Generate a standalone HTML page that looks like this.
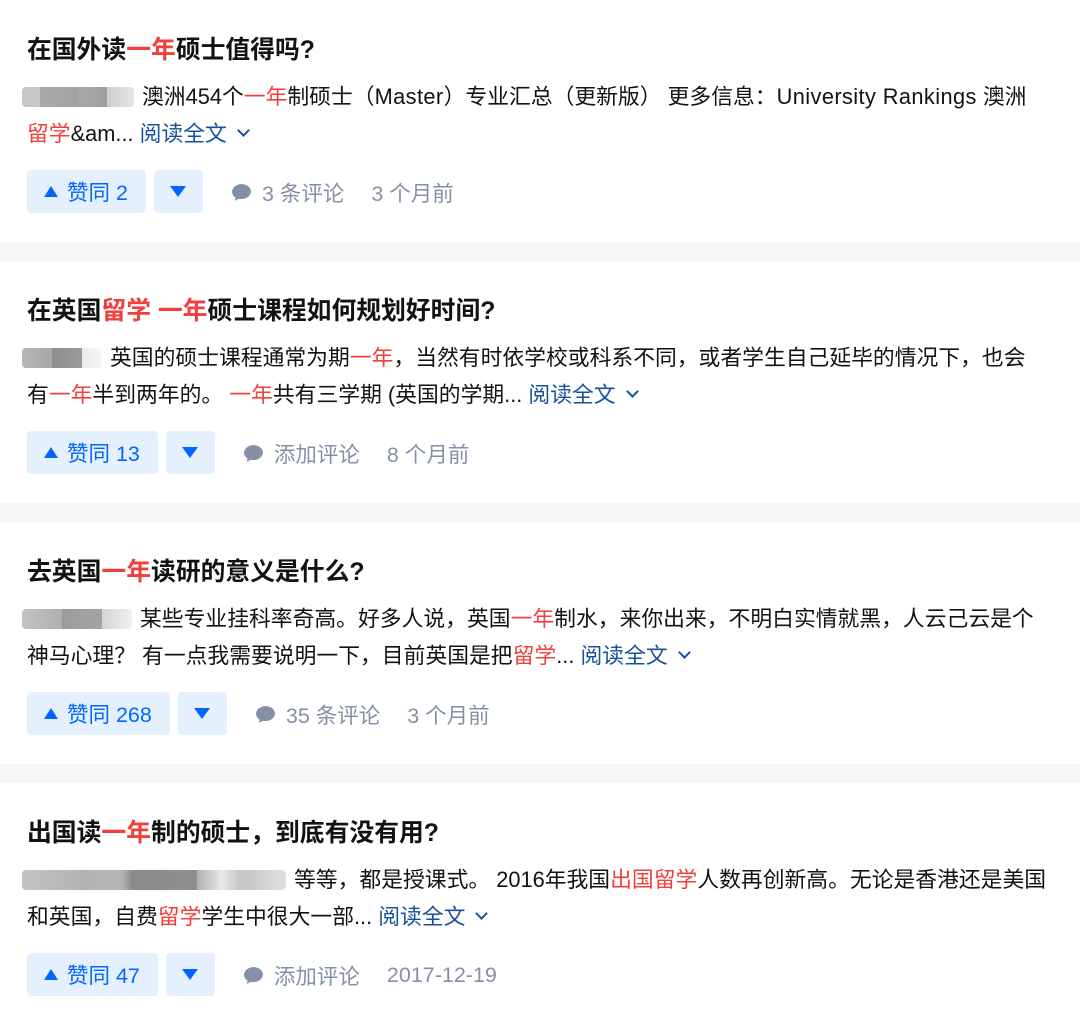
<!DOCTYPE html>
<html><head><meta charset="utf-8"><style>
*{margin:0;padding:0;box-sizing:border-box}
body{width:1080px;height:1025px;background:#fff;font-family:"Liberation Sans","Noto Sans CJK SC",sans-serif;overflow:hidden;position:relative}
.card{position:absolute;left:0;width:1080px;height:242px;background:#fff}
.band{position:absolute;left:0;width:1080px;height:19px;background:#f6f6f6}
.t{position:absolute;left:27px;top:34px;font-size:24.8px;font-weight:bold;color:#121212;line-height:34px;white-space:nowrap}
.b{position:absolute;left:27px;top:79px;width:1040px;font-size:21.8px;color:#121212;line-height:36.5px;white-space:nowrap}
.b .lat{letter-spacing:0.4px}
.r{color:#f1403c}
.l{color:#175199}
.blur{display:inline-block;height:20px;vertical-align:-3px;border-radius:4px;margin-left:-6px;margin-right:8px}
.chev{display:inline-block;width:9px;height:9px;border-right:2px solid #175199;border-bottom:2px solid #175199;transform:rotate(45deg);margin-left:12px;vertical-align:6px}
.btns{position:absolute;left:27px;top:170px;height:43px;display:flex;align-items:center;font-size:21.5px}
.up{height:43px;background:#e5f0ff;color:#0066ff;border-radius:4px;padding:0 18px 0 17px;display:flex;align-items:center}
.tri{width:0;height:0;border-left:7px solid transparent;border-right:7px solid transparent;border-bottom:11px solid #0066ff;margin-right:9px}
.dn{height:43px;width:49px;background:#e5f0ff;border-radius:4px;margin-left:8px;display:flex;align-items:center;justify-content:center}
.dn i{width:0;height:0;border-left:8px solid transparent;border-right:8px solid transparent;border-top:11px solid #0066ff}
.meta{color:#8590a6;display:flex;align-items:center;padding-top:2px}
.bub{width:21px;height:21px;margin-right:10px}
</style></head><body>

<div class="card" style="top:0">
<div class="t">在国外读<span class="r">一年</span>硕士值得吗?</div>
<div class="b"><span class="blur" style="width:112px;margin-left:-5px;background:linear-gradient(90deg,#c8c5c4 0,#c8c5c4 18px,#aaa8aa 18px,#a3a1a3 55px,#a9a6a6 55px,#9f9d9d 85px,#cfcfcf 85px,#e5e5e5 112px)"></span>澳洲454个<span class="r">一年</span>制硕士（<span class="lat">Master</span>）专业汇总（更新版） 更多信息：<span class="lat">University Rankings</span> 澳洲<br><span class="r">留学</span>&amp;am... <span class="l">阅读全文</span><span class="chev"></span></div>
<div class="btns"><div class="up"><span class="tri"></span>赞同 2</div><div class="dn"><i></i></div>
<div class="meta" style="margin-left:28px"><svg class="bub" viewBox="0 0 20 20"><path d="M10 2C5 2 1 5.3 1 9.3c0 2.3 1.3 4.3 3.4 5.6L3.5 18l4-2.1c.8.2 1.600.3 2.5.3 5 0 9-3.3 9-7.2S15 2 10 2z" fill="#8590a6"/></svg>3 条评论<span style="margin-left:27px">3 个月前</span></div></div>
</div>
<div class="band" style="top:242px"></div>

<div class="card" style="top:261px">
<div class="t">在英国<span class="r">留学 一年</span>硕士课程如何规划好时间?</div>
<div class="b"><span class="blur" style="width:80px;margin-left:-5px;background:linear-gradient(90deg,#b8b6b5 0,#a9a7a7 30px,#8e8e8f 30px,#9b9a9b 60px,#ececec 60px,#f5f5f5 80px)"></span>英国的硕士课程通常为期<span class="r">一年</span>，当然有时依学校或科系不同，或者学生自己延毕的情况下，也会<br>有<span class="r">一年</span>半到两年的。 <span class="r">一年</span>共有三学期 (英国的学期... <span class="l">阅读全文</span><span class="chev"></span></div>
<div class="btns"><div class="up"><span class="tri"></span>赞同 13</div><div class="dn"><i></i></div>
<div class="meta" style="margin-left:28px"><svg class="bub" viewBox="0 0 20 20"><path d="M10 2C5 2 1 5.3 1 9.3c0 2.3 1.3 4.3 3.4 5.6L3.5 18l4-2.1c.8.2 1.6.3 2.5.3 5 0 9-3.3 9-7.2S15 2 10 2z" fill="#8590a6"/></svg>添加评论<span style="margin-left:27px">8 个月前</span></div></div>
</div>
<div class="band" style="top:503px"></div>

<div class="card" style="top:522px">
<div class="t">去英国<span class="r">一年</span>读研的意义是什么?</div>
<div class="b"><span class="blur" style="width:110px;margin-left:-5px;background:linear-gradient(90deg,#c4c2c2 0,#b0aeae 40px,#9c9b9b 40px,#a5a4a4 80px,#d5d5d5 80px,#f0f0f0 110px)"></span>某些专业挂科率奇高。好多人说，英国<span class="r">一年</span>制水，来你出来，不明白实情就黑，人云己云是个<br>神马心理？ 有一点我需要说明一下，目前英国是把<span class="r">留学</span>... <span class="l">阅读全文</span><span class="chev"></span></div>
<div class="btns"><div class="up"><span class="tri"></span>赞同 268</div><div class="dn"><i></i></div>
<div class="meta" style="margin-left:28px"><svg class="bub" viewBox="0 0 20 20"><path d="M10 2C5 2 1 5.3 1 9.3c0 2.3 1.3 4.3 3.4 5.6L3.5 18l4-2.1c.8.2 1.6.3 2.5.3 5 0 9-3.3 9-7.2S15 2 10 2z" fill="#8590a6"/></svg>35 条评论<span style="margin-left:27px">3 个月前</span></div></div>
</div>
<div class="band" style="top:764px"></div>

<div class="card" style="top:783px">
<div class="t">出国读<span class="r">一年</span>制的硕士，到底有没有用?</div>
<div class="b"><span class="blur" style="width:264px;margin-left:-5px;background:linear-gradient(90deg,#c4c2c2 0,#b2b2b4 60px,#b5b5b7 100px,#8c8b8b 110px,#8e8e8e 175px,#aeb0b0 175px,#e8e8e8 200px,#c4c4c4 220px,#e0e0e0 264px)"></span>等等，都是授课式。 2016年我国<span class="r">出国留学</span>人数再创新高。无论是香港还是美国<br>和英国，自费<span class="r">留学</span>学生中很大一部... <span class="l">阅读全文</span><span class="chev"></span></div>
<div class="btns"><div class="up"><span class="tri"></span>赞同 47</div><div class="dn"><i></i></div>
<div class="meta" style="margin-left:28px"><svg class="bub" viewBox="0 0 20 20"><path d="M10 2C5 2 1 5.3 1 9.3c0 2.3 1.3 4.3 3.4 5.6L3.5 18l4-2.1c.8.2 1.6.3 2.5.3 5 0 9-3.3 9-7.2S15 2 10 2z" fill="#8590a6"/></svg>添加评论<span style="margin-left:27px">2017-12-19</span></div></div>
</div>
</body></html>
